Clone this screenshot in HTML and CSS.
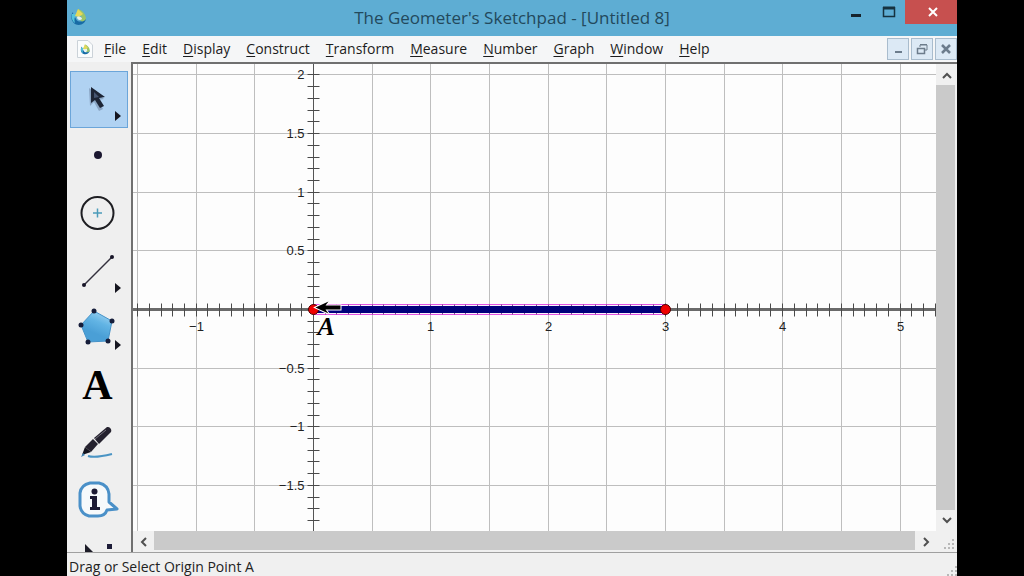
FILE: index.html
```html
<!DOCTYPE html>
<html lang="en">

<head>
    <meta charset="UTF-8">
    <meta name="viewport" content="width=device-width, initial-scale=1.0">
    <title>The Geometer's Sketchpad - [Untitled 8]</title>
    <link rel="stylesheet" href="styles.css">
</head>

<body>
    <!-- app logo, used in the title bar and the menu bar -->
    <svg class="defs" width="0" height="0" aria-hidden="true">
        <symbol id="logo" viewBox="0 0 18 18">
            <path d="M3 4C0 8 1 14 6 16.500C11 18 16 15 16 10C14 14 8 15 6 11C5 8 3 8 3 4Z" fill="#176ba5" />
            <path d="M2 6C1 9 2 13 5 15C4 12 4 9 7 6Z" fill="#55c4dc" />
            <path d="M8 1C12 2 16 6 16 11C14 14 11 14 10 12C13 9 11 6 7 6Z" fill="#9bc46a" />
            <path d="M8 1L13 6L9 9L5 8Z" fill="#e4d95a" />
            <path d="M7 9C9 8 12 9 12 11C10 13 7 12 7 9Z" fill="#e4f2ee" />
        </symbol>
    </svg>

    <div class="window">
        <header class="titlebar">
            <svg class="logo" aria-hidden="true"><use href="#logo" /></svg>
            <h1>The Geometer's Sketchpad - [Untitled 8]</h1>
            <div class="controls">
                <button type="button" aria-label="Minimize">
                    <svg width="12" height="14"><path d="M1 10.500H11" stroke="#16232c" stroke-width="3" /></svg>
                </button>
                <button type="button" aria-label="Maximize">
                    <svg width="14" height="14"><path d="M1.500 2V11.500H12.500V2" fill="none" stroke="#16323f" stroke-width="1.500" /><path d="M1 3H13" stroke="#16323f" stroke-width="3" /></svg>
                </button>
                <button type="button" class="close" aria-label="Close">
                    <svg width="12" height="12"><path d="M2 2L10 10M10 2L2 10" stroke="#fff" stroke-width="2" /></svg>
                </button>
            </div>
        </header>

        <nav class="menubar">
            <svg class="doc" viewBox="0 0 16 18" aria-hidden="true">
                <path d="M.5 .5H11L15.500 5V17.500H.5Z" fill="#fafcfd" stroke="#cbd2d8" />
                <use href="#logo" x="3" y="4" width="11" height="11" />
            </svg>
            <button type="button"><u>F</u>ile</button>
            <button type="button"><u>E</u>dit</button>
            <button type="button"><u>D</u>isplay</button>
            <button type="button"><u>C</u>onstruct</button>
            <button type="button"><u>T</u>ransform</button>
            <button type="button"><u>M</u>easure</button>
            <button type="button"><u>N</u>umber</button>
            <button type="button"><u>G</u>raph</button>
            <button type="button"><u>W</u>indow</button>
            <button type="button"><u>H</u>elp</button>
            <div class="doc-controls">
                <button type="button" aria-label="Minimize document">
                    <svg width="12" height="12"><path d="M3 9H10" stroke="#6c7c8c" stroke-width="2" /></svg>
                </button>
                <button type="button" aria-label="Restore document">
                    <svg width="12" height="12"><path d="M4 4V2H11V7H9M4 1.500H11" fill="none" stroke="#6c7c8c" stroke-width="1" /><path d="M1.500 5.500H8.500V10.500H1.500ZM1 5.500H9" fill="none" stroke="#6c7c8c" stroke-width="1.500" /></svg>
                </button>
                <button type="button" aria-label="Close document">
                    <svg width="12" height="12"><path d="M2 2L10 10M10 2L2 10" stroke="#6c7c8c" stroke-width="2.500" /></svg>
                </button>
            </div>
        </nav>

        <div class="work">
            <div class="toolbox">
                <button type="button" class="tool selected" aria-label="Selection arrow">
                    <svg viewBox="0 0 57 57">
                        <path d="M19 17L20 35L24 31L29 40L33 38L28 29L34 28Z" fill="#8aa5c4" />
                        <path d="M21 16L21 32L25 29L30 37L34 35L29 27L35 26Z" fill="#1d2536" />
                        <path d="M24 21L24 27L29 26Z" fill="#465672" />
                        <path d="M45 40L51 45L45 50Z" fill="#15151f" />
                    </svg>
                </button>
                <button type="button" class="tool" aria-label="Point">
                    <svg viewBox="0 0 57 57"><circle cx="28" cy="27" r="4" fill="#1b1730" /></svg>
                </button>
                <button type="button" class="tool" aria-label="Compass">
                    <svg viewBox="0 0 57 57">
                        <circle cx="27.500" cy="28" r="16" fill="none" stroke="#1e1e22" stroke-width="2" />
                        <path d="M23 28H32M27.500 23.500V32.500" stroke="#4c9cba" stroke-width="1.500" />
                    </svg>
                </button>
                <button type="button" class="tool" aria-label="Segment">
                    <svg viewBox="0 0 57 57">
                        <path d="M14 43L42 15" stroke="#33303d" stroke-width="1.500" />
                        <circle cx="14" cy="43" r="2" fill="#171528" />
                        <circle cx="42" cy="15" r="2" fill="#171528" />
                        <path d="M45 41L51 46L45 51Z" fill="#15151f" />
                    </svg>
                </button>
                <button type="button" class="tool" aria-label="Polygon">
                    <svg viewBox="0 0 57 57">
                        <defs>
                            <linearGradient id="poly" x1="0.7" y1="0" x2="0.4" y2="0.7">
                                <stop offset="0" stop-color="#9fd3f2" />
                                <stop offset="0.5" stop-color="#62b4e4" />
                                <stop offset="1" stop-color="#4a9fd6" />
                            </linearGradient>
                        </defs>
                        <path d="M24 12L42 22L38 42L18 43L11 26Z" fill="url(#poly)" stroke="#4592c8" />
                        <g fill="#161d3a">
                            <circle cx="24" cy="12" r="2.500" />
                            <circle cx="42" cy="22" r="2.500" />
                            <circle cx="38" cy="42" r="2.500" />
                            <circle cx="18" cy="43" r="2.500" />
                            <circle cx="11" cy="26" r="2.500" />
                        </g>
                        <path d="M45 41L51 46L45 51Z" fill="#15151f" />
                    </svg>
                </button>
                <button type="button" class="tool letter" aria-label="Text">A</button>
                <button type="button" class="tool" aria-label="Marker">
                    <svg viewBox="0 0 57 57">
                        <path d="M18 43C24 45 34 43 42 41" fill="none" stroke="#4a94c4" stroke-width="2" />
                        <path d="M12 42L15 34L21 39Z" fill="#15151f" />
                        <path d="M11 44L13 40L15 42Z" fill="#3c7fb0" />
                        <path d="M15 34L23 26L28 31L21 39Z" fill="#25222f" />
                        <path d="M24 25L37 14C40 14 42 16 41 19L29 31Z" fill="#25222f" />
                        <path d="M25 26L36 17" stroke="#77747f" />
                    </svg>
                </button>
                <button type="button" class="tool" aria-label="Information">
                    <svg viewBox="0 0 57 57">
                        <path d="M20 13H29Q38 15 39 24V32L47 39L37 40Q35 46 28 46H19Q11 44 10 36V23Q11 15 20 13Z" fill="#f6f9fb" stroke="#4a90c8" stroke-width="3" stroke-linejoin="round" />
                        <circle cx="24.500" cy="21.500" r="3" fill="#1c1a33" />
                        <path d="M20 26H27V37H30V40H20V37H22V29H20Z" fill="#1c1a33" />
                    </svg>
                </button>
                <button type="button" class="tool" aria-label="Custom tools">
                    <svg viewBox="0 0 57 57"><path d="M15 17L15 32L25 27Z" fill="#1d1c28" /><path d="M37 17H42V22H37Z" fill="#1d1c38" /></svg>
                </button>
            </div>

            <main class="document">
                <svg id="sketch" class="sketch" role="img" aria-label="Coordinate plane with a segment from A to 3"></svg>
                <div class="scroll vertical">
                    <button type="button" aria-label="Scroll up"><svg width="12" height="10"><path d="M2 8L6 4L10 8" /></svg></button>
                    <div class="thumb"></div>
                    <button type="button" aria-label="Scroll down"><svg width="12" height="10"><path d="M2 2L6 6L10 2" /></svg></button>
                </div>
                <div class="scroll horizontal">
                    <button type="button" aria-label="Scroll left"><svg width="10" height="12"><path d="M7 2L3 6L7 10" /></svg></button>
                    <div class="thumb"></div>
                    <button type="button" aria-label="Scroll right"><svg width="10" height="12"><path d="M3 2L7 6L3 10" /></svg></button>
                </div>
                <div class="corner"><svg class="grip" viewBox="0 0 10 10"><path d="M8 0h2v2H8zM4 4h2v2H4zM8 4h2v2H8zM0 8h2v2H0zM4 8h2v2H4zM8 8h2v2H8z" /></svg></div>
            </main>
        </div>

        <footer class="status">
            <span>Drag or Select Origin Point A</span>
            <svg class="grip" viewBox="0 0 10 10" aria-hidden="true"><path d="M8 0h2v2H8zM4 4h2v2H4zM8 4h2v2H8zM0 8h2v2H0zM4 8h2v2H4zM8 8h2v2H8z" /></svg>
        </footer>
    </div>

    <script src="sketch.js"></script>
</body>

</html>
```

FILE: styles.css
```css
* {
    box-sizing: border-box;
}

body {
    margin: 0;
    padding: 0 67px;
    background: #000;
    font-family: "Open Sans", "Noto Sans", sans-serif;
    overflow: hidden;
}

button {
    margin: 0;
    padding: 0;
    border: none;
    background: none;
    font: inherit;
    color: inherit;
}

.defs {
    position: absolute;
}

.window {
    display: flex;
    flex-direction: column;
    height: 100vh;
    background: #f0f0f0;
}

/* title bar */
.titlebar {
    display: grid;
    grid-template-columns: 130px 1fr 130px;
    height: 36px;
    background: #5eadd3;
}

.titlebar .logo {
    width: 18px;
    height: 18px;
    margin: 8px 3px;
}

.titlebar h1 {
    margin: 0;
    font-size: 17px;
    font-weight: 400;
    line-height: 36px;
    text-align: center;
    white-space: nowrap;
    color: #23495c;
}

.controls {
    display: flex;
    justify-content: flex-end;
}

.controls button {
    display: flex;
    align-items: center;
    justify-content: center;
    width: 33px;
    height: 24px;
}

.controls .close {
    width: 52px;
    padding-left: 4px;
    background: #c7504f;
}

/* menu bar */
.menubar {
    display: flex;
    align-items: center;
    height: 26px;
    padding-left: 10px;
    background: #f5f6f7;
    font-size: 14px;
    line-height: 20px;
    color: #1c1c1c;
}

.menubar .doc {
    width: 16px;
    height: 18px;
    margin-right: 3px;
}

.menubar > button {
    padding: 0 8px;
}

.menubar u {
    text-underline-offset: 2px;
}

.doc-controls {
    display: flex;
    gap: 2px;
    margin-left: auto;
}

.doc-controls button {
    display: flex;
    align-items: center;
    justify-content: center;
    width: 22px;
    height: 22px;
    border: 1px solid #a9bccd;
    background: #dce9f5;
}

/* toolbox */
.work {
    display: flex;
    flex: 1;
    min-height: 0;
    border-bottom: 1px solid #a0a0a0;
}

.toolbox {
    flex: none;
    width: 64px;
    padding: 9px 3px 0;
    overflow: hidden;
    background: #efefef;
}

.tool {
    display: block;
    width: 58px;
    height: 57px;
}

.tool svg {
    display: block;
    width: 57px;
    height: 57px;
}

.tool.selected {
    background: #b0d2f2;
    box-shadow: inset 0 0 0 1px #6ba5d9;
}

.tool.letter {
    padding-right: 3px;
    font-family: "Liberation Serif", serif;
    font-size: 42px;
    font-weight: 700;
    color: #000;
}

/* sketch and scroll bars */
.document {
    display: grid;
    flex: 1;
    grid-template-columns: 1fr 21px;
    grid-template-rows: 1fr 21px;
    min-width: 0;
    border-top: 2px solid #707070;
    border-left: 2px solid #707070;
    background: #f0f0f0;
}

.sketch {
    display: block;
    width: 100%;
    height: 100%;
    min-height: 0;
    background: #fdfdfd;
    font-family: "Liberation Sans", sans-serif;
    font-size: 13px;
}

.scroll {
    display: flex;
}

.scroll button {
    display: flex;
    flex: none;
    align-items: center;
    justify-content: center;
    width: 21px;
    height: 21px;
}

.scroll path {
    fill: none;
    stroke: #505050;
    stroke-width: 2;
}

.scroll .thumb {
    flex: 1;
    background: #cacaca;
}

.vertical {
    flex-direction: column;
    padding-right: 2px;
}

.horizontal {
    padding-bottom: 2px;
}

.corner {
    display: flex;
    align-items: flex-end;
    justify-content: flex-end;
    padding: 3px;
}

.grip {
    width: 10px;
    height: 10px;
    fill: #b8b8b8;
}

/* drawing */
.grid {
    stroke: #bebebe;
}

.tick {
    stroke: #4a4a4a;
}

.tick-inside {
    stroke: #7a4a8c;
}

.axis-x {
    stroke: #6a6a6a;
    stroke-width: 3;
}

.axis-y {
    stroke: #555;
}

.label {
    fill: #222;
}

.segment {
    stroke: #00007c;
    stroke-width: 7;
}

.halo {
    fill: #fdf0fd;
    stroke: #e254e2;
}

.point {
    fill: #f00000;
    stroke: #4a0000;
}

.name {
    font: italic bold 26px "Liberation Serif", serif;
}

.cursor {
    fill: #000;
    stroke: #fff;
    paint-order: stroke;
    stroke-width: 2;
}

/* status bar */
.status {
    display: flex;
    flex: none;
    align-items: flex-end;
    justify-content: space-between;
    height: 23px;
    padding-left: 2px;
    font-size: 14px;
    line-height: 18px;
    color: #222;
}
```

FILE: sketch.js
```js
const sketch = document.getElementById('sketch');
const unit = 117.3;
const originX = 180;
const originY = 245;

function add(tag, attrs, text) {
    const el = document.createElementNS('http://www.w3.org/2000/svg', tag);
    for (const key in attrs) {
        el.setAttribute(key, attrs[key]);
    }
    if (text) {
        el.textContent = text;
    }
    sketch.appendChild(el);
}

function line(name, x1, y1, x2, y2) {
    add('line', { class: name, x1, y1, x2, y2 });
}

// snap to the middle of a pixel so that thin lines stay sharp
function toX(value) {
    return Math.round(originX + value * unit) + 0.5;
}

function toY(value) {
    return Math.round(originY - value * unit) + 0.5;
}

function draw() {
    const width = sketch.clientWidth;
    const height = sketch.clientHeight;
    const left = Math.ceil(-originX / unit * 10);
    const right = Math.floor((width - originX) / unit * 10);
    const bottom = Math.ceil((originY - height) / unit * 10);
    const top = Math.floor(originY / unit * 10);
    const x0 = toX(0);
    const y0 = toY(0);
    sketch.textContent = '';

    for (let i = left; i <= right; i++) {
        if (i % 5 === 0) line('grid', toX(i / 10), 0, toX(i / 10), height);
    }
    for (let i = bottom; i <= top; i++) {
        if (i % 5 === 0) line('grid', 0, toY(i / 10), width, toY(i / 10));
    }

    line('axis-x', 0, y0, width, y0);
    line('axis-y', x0, 0, x0, height);
    add('rect', { class: 'halo', x: x0, y: y0 - 5, width: toX(3) - x0, height: 10 });

    for (let i = left; i <= right; i++) {
        if (i > 0 && i < 30) {
            line('tick-inside', toX(i / 10), y0 - 5, toX(i / 10), y0 + 5);
        } else {
            line('tick', toX(i / 10), y0 - 6, toX(i / 10), y0 + 7);
        }
        if (i % 10 === 0 && i !== 0) {
            add('text', { class: 'label', x: toX(i / 10), y: y0 + 21, 'text-anchor': 'middle' }, String(i / 10).replace('-', '−'));
        }
    }
    for (let i = bottom; i <= top; i++) {
        line('tick', x0 - 6, toY(i / 10), x0 + 6, toY(i / 10));
        if (i % 5 === 0 && i !== 0) {
            add('text', { class: 'label', x: x0 - 9, y: toY(i / 10) + 4, 'text-anchor': 'end' }, String(i / 10).replace('-', '−'));
        }
    }

    line('segment', x0, y0, toX(3), y0);
    add('circle', { class: 'point', cx: x0, cy: y0, r: 5 });
    add('circle', { class: 'point', cx: toX(3), cy: y0, r: 5 });
    add('text', { class: 'name', x: x0 + 4, y: y0 + 25 }, 'A');
    add('path', { class: 'cursor', d: 'M0 0L13 -6L10 -2H25V2H10L13 6Z', transform: `translate(${x0 + 2} ${y0 - 2})` });
}

draw();
window.addEventListener('resize', draw);
```
